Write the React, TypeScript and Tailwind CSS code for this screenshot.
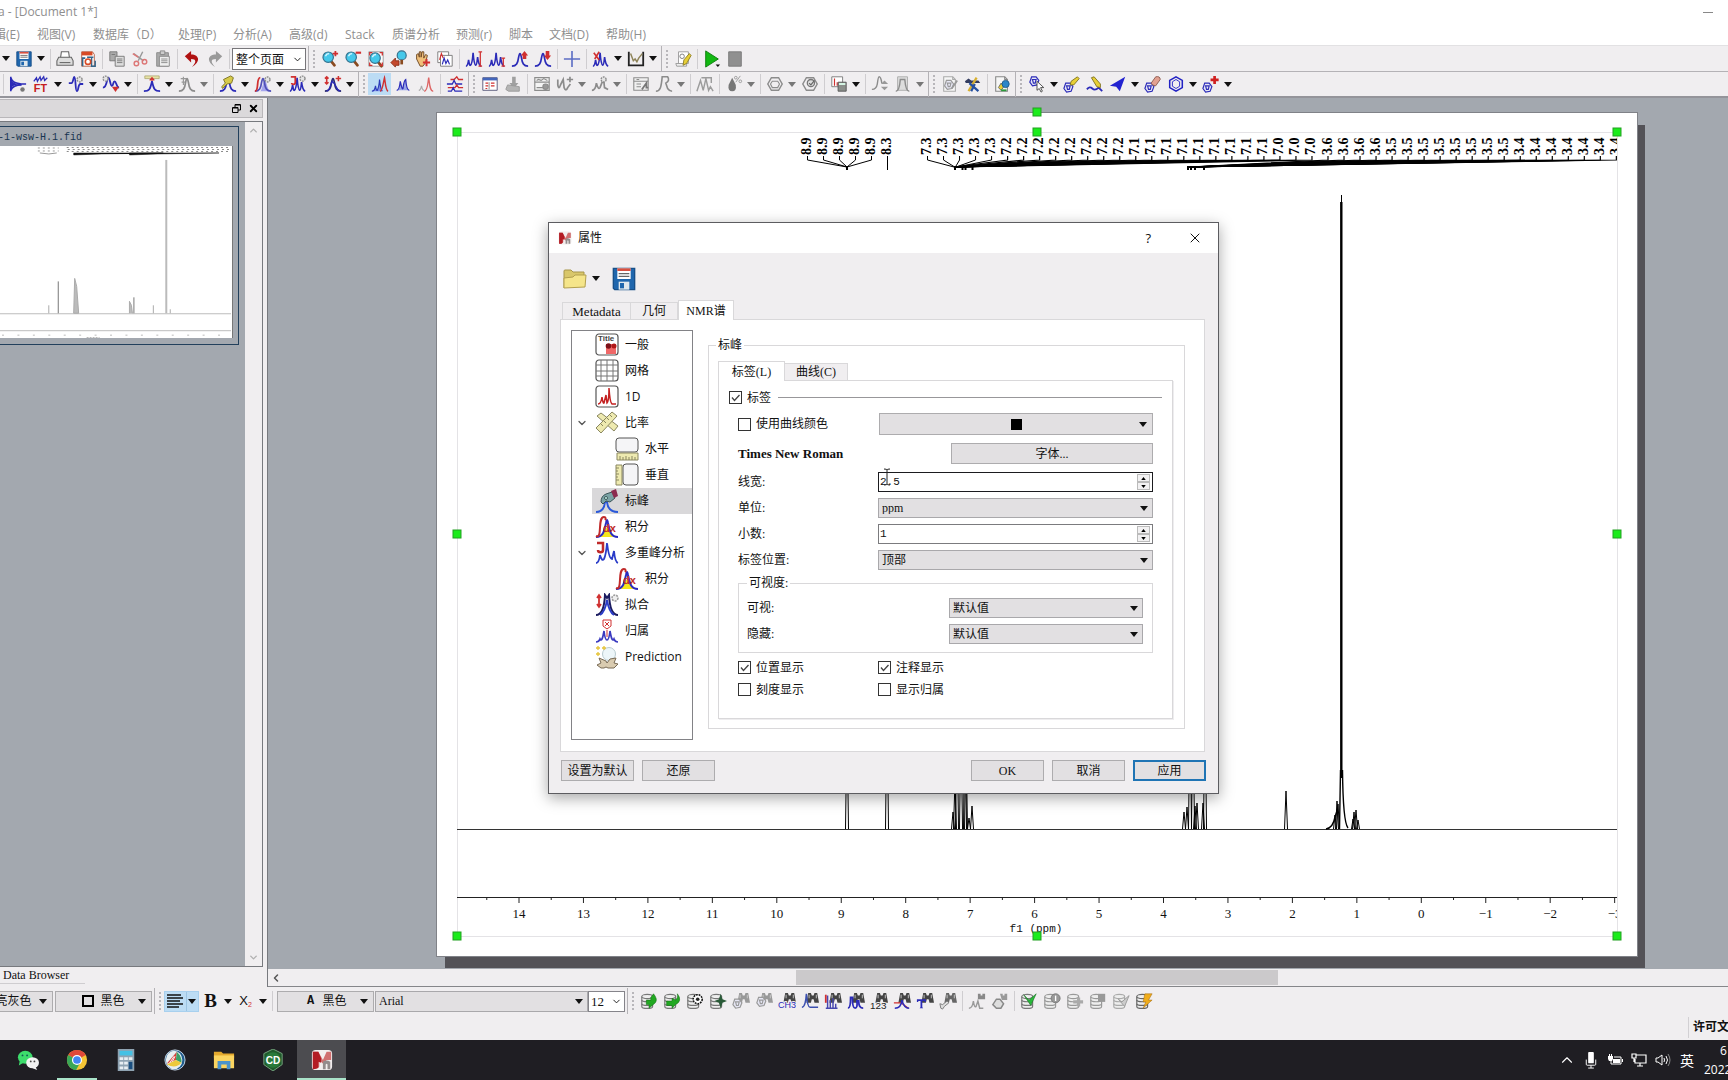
import type { ReactNode } from 'react'
import { ChevronDown, ChevronLeft, ChevronUp, X } from 'lucide-react'

const BLUE = '#2b2bb8'
const RED = '#d03030'
const GRAY = '#8c8c8c'

/* ---------- small drawing parts, all on a 20x20 grid ---------- */

function Peak({ c = BLUE }: { c?: string }) {
  return <path d="M1 18C6 18 7.500 15 8.500 8Q10 0 11.500 8C12.500 15 14 18 19 18" fill="none" stroke={c} strokeWidth="1.9" />
}

function Peaks({ c = BLUE }: { c?: string }) {
  return <path d="M1 18Q3 18 4 11Q5 18 6 17Q8 16 9 3Q10 16 12 17Q13 17 14 8Q15 17 18 18" fill="none" stroke={c} strokeWidth="1.8" />
}

function Gear({ x = 14, y = 5 }: { x?: number; y?: number }) {
  return <circle cx={x} cy={y} r="2.800" fill="#e4e4e4" stroke="#8a8a8a" strokeWidth="1.500" strokeDasharray="2 1" />
}

function Lens({ x = 10, y = 8 }: { x?: number; y?: number }) {
  return (
    <g>
      <path d={`M${x + 3} ${y + 4}l4 5`} stroke="#8a4a20" strokeWidth="3" strokeLinecap="round" />
      <circle cx={x} cy={y} r="5.800" fill="#45c8ea" stroke="#36718d" strokeWidth="1.300" />
      <path d={`M${x - 3} ${y - 1}q1-3 4-3`} fill="none" stroke="#d8f6ff" strokeWidth="1.400" />
    </g>
  )
}

function Binoculars({ c = '#444' }: { c?: string }) {
  return (
    <g fill={c}>
      <path d="M8 1h3l1 3h2l1-3h3l2 11h-5l-1-4h-2l-1 4H6z" />
      <path d="M9 3v4M17 3v4" stroke="#ccc" />
    </g>
  )
}

function Hexagon({ c = BLUE }: { c?: string }) {
  return (
    <g fill="none" stroke={c} strokeWidth="1.700">
      <path d="M10 2l7 4v8l-7 4-7-4V6z" />
      <path d="M10 5l4 2.500v5L10 15l-4-2.500v-5z" strokeWidth="1" />
    </g>
  )
}

function SmallHex({ c = BLUE, x = 2, y = 8 }: { c?: string; x?: number; y?: number }) {
  return <path d={`M${x + 2} ${y}h5l3 4-2 5-5 1-3-4zM${x + 3} ${y + 3}h4l-1 4h-2z`} fill="#e6e6f4" stroke={c} strokeWidth="1.300" />
}

function Database({ c = '#777' }: { c?: string }) {
  return (
    <g fill="#eee" stroke={c} strokeWidth="1.300">
      <path d="M2 5v11c0 3 12 3 12 0V5" />
      <ellipse cx="8" cy="5" rx="6" ry="2.300" />
      <path d="M2 9c0 2.500 12 2.500 12 0M2 13c0 2.500 12 2.500 12 0" fill="none" />
    </g>
  )
}

function Sheet({ c = '#888' }: { c?: string }) {
  return (
    <g fill="#f6f6f6" stroke={c} strokeWidth="1.200">
      <path d="M3 2h10l3 3v13H3z" />
      <path d="M13 2v3h3" fill="none" />
    </g>
  )
}

function Floppy() {
  return (
    <g>
      <path d="M2 2h16v16H3l-1-1z" fill="#1f66ad" stroke="#174f88" />
      <path d="M5 2h10v8H5z" fill="#fff" />
      <path d="M5 2h10v2H5z" fill="#d85040" />
      <path d="M6 6h8M6 8h8" stroke="#666" />
      <path d="M6 12h8v6H6z" fill="#dfe8ee" />
      <path d="M7 13h3v4H7z" fill="#1f66ad" />
    </g>
  )
}

const icons: Record<string, ReactNode> = {
  save: <Floppy />,
  print: <g stroke="#666" strokeWidth="1.200"><path d="M6 2h8l1 7H5z" fill="#fff" /><path d="M3 8h14l2 4v5H1v-5z" fill="#ddd" /><path d="M4 14h12" /></g>,
  pdf: <g><path d="M3 2h12l2 3v13H3z" fill="#fff" stroke="#b05a40" /><path d="M3 2h12v4H3z" fill="#d84a25" /><path d="M4 18V9h3" fill="none" stroke="#33658a" strokeWidth="1.800" /><path d="M9 8h7M14 8v10h4v-6" fill="none" stroke="#33658a" strokeWidth="1.600" /><circle cx="10" cy="13" r="3" fill="none" stroke="#d84a25" strokeWidth="1.800" /></g>,
  copy: <g stroke="#777"><path d="M2 2h8v10H2z" fill="#aaa" /><path d="M8 7h10v11H8z" fill="#ddd" /><path d="M10 10h6M10 12h6M10 14h6M4 5h4" /></g>,
  cut: <g fill="none" strokeWidth="1.600"><path d="M3 4l11 8M13 2L8 12" stroke="#999" /><circle cx="6" cy="15" r="2.500" stroke="#d77" /><circle cx="15" cy="13" r="2.500" stroke="#d77" /><path d="M2 4l6 4" stroke="#d77" /></g>,
  paste: <g stroke="#888"><path d="M3 3h13v15H3z" fill="#aaa" /><path d="M6 7h11v11H6z" fill="#eee" /><path d="M7 1h5v4H7z" fill="#ccc" /><path d="M8 10h7M8 12h7M8 14h7" /></g>,
  undo: <path d="M10 19c5-6 5-9-1-9v4L2 7l7-6v4c8 0 12 7 1 14z" fill="#b01212" />,
  redo: <path d="M10 19c-5-6-5-9 1-9v4l7-7-7-6v4C3 5-1 12 10 19z" fill="#9a9a9a" />,
  zoomIn: <g><Lens x={8} y={8} /><path d="M16 1v6M13 4h6" stroke={RED} strokeWidth="2" /></g>,
  zoomOut: <g><Lens x={8} y={8} /><path d="M13 3h6" stroke={RED} strokeWidth="2.400" /></g>,
  zoomFit: <g><path d="M2 2h16v16H2z" fill="#fff" stroke="#999" /><Lens x={9} y={9} /><path d="M3 6V3h3M14 3h3v3M3 14v3h3M17 14v3h-3" fill="none" stroke={RED} strokeWidth="1.400" /></g>,
  zoomBack: <g><circle cx="13" cy="6" r="5" fill="#45c8ea" stroke="#36718d" strokeWidth="1.300" /><path d="M13 11v5" stroke="#8a4a20" strokeWidth="3" /><path d="M1 14l5-5v3h4v5H6v2z" fill="#c4482c" stroke="#8b3018" /></g>,
  pan: <g><path d="M4 10V5l2-1 1 4V2h2v6l1-6h2v7l2-4 2 1-2 8-3 4H8z" fill="#f0c07a" stroke="#6a4420" /><path d="M15 10v8M11 14h8" stroke={RED} strokeWidth="2.200" /></g>,
  fullPages: <g fill="#fff" stroke="#777"><path d="M2 2h12v12H2z" /><path d="M5 6h13v12H5z" /><path d="M4 11l2-7 2 5" stroke={RED} fill="none" strokeWidth="1.300" /><path d="M7 16l2-7 2 6 2-4 2 5" stroke={BLUE} fill="none" strokeWidth="1.300" /></g>,
  peaksBoth: <g><Peaks /><path d="M17 2v16M15 2h4M15 18h4" stroke={RED} strokeWidth="1.400" /></g>,
  peaksLow: <g><Peaks /><path d="M17 9v9M15 9h4M15 18h4" stroke={RED} strokeWidth="1.400" /></g>,
  peakUp: <g><Peak /><path d="M13 10V6h-2l4-5 4 5h-2v4z" fill={RED} /></g>,
  peakDown: <g><Peak /><path d="M13 1v5h-2l4 5 4-5h-2V1z" fill={RED} /></g>,
  cross: <path d="M10 1v18M1 10h18" stroke="#5c6ec4" strokeWidth="1.800" />,
  crossPeak: <g><Peaks /><path d="M2 3l6 8M8 2L3 10" stroke={RED} strokeWidth="1.800" /></g>,
  measure: <g fill="none"><path d="M2 2v15h16V2" stroke="#222" strokeWidth="2" /><path d="M4 4l3 8 2-2 2 3 2-4 4-5" stroke="#8e8358" strokeWidth="1.600" /></g>,
  script: <g><path d="M5 2h11v13H5z" fill="#fff" stroke="#999" /><path d="M2 15h12v3H3z" fill="#eee" stroke="#999" /><circle cx="9" cy="7" r="2.500" fill="none" stroke="#777" /><path d="M10 17l1-6 6-7 2 2-5 9z" fill="#e7cf35" stroke="#8a7a20" /></g>,
  play: <g><path d="M3 1l14 9-14 9z" fill="#12b812" stroke="#0a7a0a" /><path d="M14 16h5l-2.500 3z" fill="#111" /></g>,
  stop: <path d="M3 2h14v16H3z" fill="#909090" stroke="#777" />,

  decay: <g><path d="M2 2v16M2 3c2 6 6 6 12 7h5M2 17c2-5 6-6 12-6" stroke={BLUE} strokeWidth="1.800" fill="none" /><path d="M2 4c2 5 5 6 12 6-7 1-10 1-12 6z" fill={BLUE} /><circle cx="15" cy="16" r="2.500" fill="#777" /></g>,
  ft: <g><path d="M2 7l3-4 1 4 3-5 1 4 3-4 1 4 3-3" fill="none" stroke={BLUE} strokeWidth="1.400" /><text x="2" y="19" className="font-['Liberation_Sans'] text-[12px] font-bold" fill="#c62020">FT</text></g>,
  phase: <g><path d="M2 9h3c2 0 2-7 3-7 2 0 1 16 3 16s1-8 4-8h3" fill="none" stroke={BLUE} strokeWidth="2" /><Gear /></g>,
  baseline: <g><path d="M1 14c5 0 4-11 6-11s2 9 4 9 1-5 3-5 2 7 5 7" fill="none" stroke={BLUE} strokeWidth="2" /><Gear x={4} y={4} /><path d="M11 13h8l-4 6z" fill={RED} /></g>,
  pickPeak: <g><path d="M2 1h16v3H2z" fill="#e7e2a6" stroke="#a7a268" strokeWidth=".8" /><path d="M10 3v7M7.500 6L10 3l2.500 3" stroke={RED} strokeWidth="1.500" fill="none" /><path d="M1 18c6 0 7-2 9-11 2 9 3 11 9 11" fill="none" stroke={BLUE} strokeWidth="2" /></g>,
  pickGray: <g><Peak c={GRAY} /><path d="M3 4h6M4 8h4M6 2v9" stroke="#999" strokeWidth="1.300" /></g>,
  peakPen: <g><Peak /><path d="M3 13l4-4-2-4 8-4 3 2-2 6-5 1-5 5z" fill="#d6ca4a" stroke="#7a7020" /></g>,
  integral: <g><path d="M7 18c2-1 3-12 5-12s3 11 6 12z" fill="#a5a5ec" /><Peak c="#5050b8" /><path d="M1 18c5 0 1-15 6-15" fill="none" stroke={RED} strokeWidth="2" /><Gear x={15} /></g>,
  jPeaks: <g><Peaks /><path d="M2 2h5v6c0 3-4 3-4 1" fill="none" stroke={RED} strokeWidth="2" /><Gear x={15} y={4} /></g>,
  fitPeaks: <g><Peak c="#2a2a70" /><path d="M3 18c4-1 4-8 6-11l3 3c2 3 2 7 6 8" fill="none" stroke={BLUE} strokeWidth="1.500" /><path d="M3 2v8M1 4l2-2 2 2M1 8l2 2 2-2M13 4h6M16 1v6" stroke={RED} strokeWidth="1.700" fill="none" /></g>,
  overlay: <g><path d="M1 18q3 0 4-6 1 6 2 5Q9 13 9.500 5q1 10 3 13" fill="#7c8ce8" stroke="#2b3bb8" strokeWidth="1.300" /><path d="M10 18c3 0 4-12 5-15 1 5 1 14 4 15" fill="none" stroke={RED} strokeWidth="1.600" /></g>,
  active: <path d="M3 17q3 0 4-10 2 10 3 8 1-9 3-10 1 12 4 12" fill="#98a4e6" stroke={BLUE} strokeWidth="1.400" />,
  reference: <g fill="none"><path d="M2 17q2 0 3-5 1 5 3 5" stroke="#aaa" strokeWidth="1.300" /><path d="M8 18c4 0 4-10 5-15 1 6 1 15 5 15" stroke="#d66" strokeWidth="1.500" /></g>,
  stacked: <g fill="none" strokeWidth="1.400"><path d="M5 5h4l3-3 2 3 5 0" stroke={RED} /><path d="M1 10h6l2-4 2 4h7" stroke={BLUE} /><path d="M2 14h8l2-3 2 3h5" stroke={RED} /><path d="M2 18h4l2-4 2 4h8" stroke={BLUE} /></g>,
  table: <g><path d="M2 3h16v14H2z" fill="#fff" stroke="#557" /><path d="M2 3h16v3H2z" fill="#46b" /><path d="M5 9h3M5 12h3M5 15h2M11 9h4M11 12h4" stroke={RED} strokeWidth="1.300" /><path d="M9 8v8" stroke="#888" /></g>,
  stamp: <g><path d="M9 2h4v7h3l-5 6-5-6h3z" fill="#a0a0a0" /><path d="M4 11l-2 5 3 2h12v-5z" fill="#b4b4b4" stroke="#999" /></g>,
  gBox: <g fill="none" stroke={GRAY} strokeWidth="1.300"><path d="M2 3h16v14H2z" fill="#f4f4f4" /><path d="M2 8h16M4 6l2-1 3 1 3-2 4 2M4 14h7" /><circle cx="14" cy="13" r="3" fill="#999" /></g>,
  gPeakPlus: <path d="M2 5v6q1 6 3 0l3-6 1 9q2 5 4 0l3-4M12 5h7M15.500 2v6" fill="none" stroke={GRAY} strokeWidth="1.900" />,
  gWave: <g><path d="M1 17q4 0 5-8 2 8 4 5l4-10 1 10 4 2" fill="none" stroke={GRAY} strokeWidth="1.900" /><Gear x={14} y={5} /></g>,
  gSheet: <g fill="none" stroke={GRAY} strokeWidth="1.200"><path d="M2 3h16v14H2z" fill="#f0f0f0" /><path d="M2 7h16M5 5h3M5 10h5M5 13h5" /><path d="M11 16l5-7v5h2" stroke="#777" strokeWidth="2" /></g>,
  gPeakR: <g><path d="M1 18c5 0 6-5 7-16h6q3 4-2 7l2 6q2 3 5 3" fill="none" stroke={GRAY} strokeWidth="1.800" /></g>,
  gTwo: <path d="M1 18l4-12 3 11 3-13 3 13 2-4 3 5M6 3h11v6" fill="none" stroke="#9c9c9c" strokeWidth="1.600" />,
  gDrop: <g><path d="M8 3l4 8q1 7-4 7t-4-7z" fill="#777" /><path d="M12 8l5-7" stroke="#999" /><circle cx="12" cy="3" r="1.500" fill="none" stroke="#999" /><circle cx="17" cy="7" r="1.500" fill="none" stroke="#999" /></g>,
  gHex: <g fill="none" stroke={GRAY} strokeWidth="1.600"><path d="M6 3h8l4 7-4 7H6l-4-7z" /><path d="M7 7h6l2 3-2 4H7l-2-4z" strokeWidth="1.200" /></g>,
  gHexGear: <g><path d="M6 3h8l4 7-4 7H6l-4-7z" fill="none" stroke={GRAY} strokeWidth="1.600" /><circle cx="11" cy="9" r="4" fill="#ddd" stroke="#777" strokeWidth="1.400" /><path d="M9 9l2 2 4-5" fill="none" stroke="#666" strokeWidth="1.300" /></g>,
  docCalc: <g><path d="M2 2h12v11H2z" fill="#fff" stroke="#777" /><path d="M5 4v8M8 8v4" stroke={RED} strokeWidth="1.300" /><path d="M9 8h9v10H9z" fill="#8b8f8b" stroke="#555" /><path d="M10 10h7" stroke="#dfe" strokeWidth="2" /></g>,
  gUpDown: <g><path d="M1 16q5 0 6-6 1-8 2-8 2 0 3 7" fill="none" stroke={GRAY} strokeWidth="1.600" /><path d="M11 10h8l-4-4zM11 13h8l-4 4z" fill="#999" /></g>,
  gBarPeak: <g><path d="M4 2h11v15H4z" fill="#ddd" stroke="#aaa" /><path d="M2 18q4 0 5-13h5q1 13 5 13" fill="none" stroke={GRAY} strokeWidth="1.600" /></g>,
  gReport: <g><Sheet c="#aaa" /><SmallHex c="#999" x={4} y={6} /><path d="M12 15l6-9" stroke="#999" strokeWidth="2" /></g>,
  tools: <g><path d="M1 7l4-3 3 2h8l2 3H2z" fill="#333c60" /><path d="M5 18L14 3" stroke="#d8b030" strokeWidth="2.500" /><path d="M6 9l10 9M12 10l-4 8" stroke="#2450a0" strokeWidth="2.500" fill="none" /></g>,
  docHex: <g><Sheet /><path d="M6 14l3-5 3 4-3 4z" fill="#e7cf35" stroke="#666" /><circle cx="14" cy="10" r="4" fill="#2c86c8" stroke="#1b5a8a" /><path d="M9 17h6" stroke="#2a9a3a" strokeWidth="2" /></g>,
  pickHex: <g><SmallHex x={2} y={2} /><path d="M10 7v10l2.500-2 2 4 1.500-1-2-4h3.500z" fill="#fff" stroke="#444" /></g>,
  penHex: <g><SmallHex x={1} y={9} /><path d="M8 11l1-4 7-5 2 2-6 7z" fill="#e7cf35" stroke="#7d7020" /></g>,
  penWave: <g><path d="M1 16q3-4 6-1t7-1l4 4" stroke={BLUE} strokeWidth="2" fill="none" /><path d="M6 3l3-1 7 8v4l-4-1z" fill="#e7cf35" stroke="#7d7020" /></g>,
  arrow: <path d="M1 12L18 2l-6 16-4-5z" fill="#2222d0" />,
  eraser: <g><SmallHex x={1} y={9} /><path d="M8 9l5-7q5-1 5 3l-5 7q-4 0-5-3z" fill="#e2a090" stroke="#8a5a50" /></g>,
  benzene: <Hexagon c="#2222c4" />,
  hexPlus: <g><SmallHex x={1} y={9} /><path d="M14 1v9M9.500 5.500h9" stroke="#d02020" strokeWidth="3" /></g>,

  dbOpen: <g><Database /><path d="M7 9h5V6l3-4q5 6 2 10l-7 6v-4H7z" fill="#22a822" stroke="#136c13" strokeWidth=".6" /></g>,
  dbSave: <g><Database /><path d="M4 10h6V7l4 2q3-2 2-7 6 8-2 12l-4 4v-3H4z" fill="#22a822" stroke="#136c13" strokeWidth=".6" /></g>,
  dbView: <g><Database /><circle cx="13" cy="8" r="5" fill="#fff" stroke="#111" strokeWidth="1.700" strokeDasharray="2 1" /><circle cx="13" cy="8" r="2" fill="#222" /></g>,
  dbAdd: <g><Database /><path d="M13 2l2 6 5 2-5 2-2 6-2-6-5-2 5-2z" fill="#2a5a38" /></g>,
  findHex: <g><Binoculars c="#999" /><SmallHex c="#999" x={1} y={8} /></g>,
  findHex2: <g><Binoculars c="#999" /><SmallHex c="#999" x={2} y={6} /></g>,
  findCh: <g><Binoculars /><text x="0" y="18" className="font-['Liberation_Sans'] text-[10px]" fill={BLUE} stroke="#f0eef0" strokeWidth="2" paintOrder="stroke">CH3</text></g>,
  findPeak: <g><Binoculars /><path d="M1 17q4 0 5-15 1 15 4 15h9" fill="none" stroke="#3c50b0" strokeWidth="1.700" /></g>,
  findBars: <g><Binoculars /><path d="M2 3v9" stroke={RED} strokeWidth="2" /><path d="M4 18V4M7 18V9M10 18V7M13 18v-5M2 18h13" stroke="#4646b0" strokeWidth="1.600" /></g>,
  findMulti: <g><Binoculars /><path d="M1 18q3 0 3-12h2q0 12 3 12t2-8h2q0 8 5 8" fill="none" stroke={BLUE} strokeWidth="2" /></g>,
  find123: <g><Binoculars /><text x="0" y="19" className="font-['Liberation_Sans'] text-[11px]" fill="#222" stroke="#f0eef0" strokeWidth="2" paintOrder="stroke">123</text></g>,
  findCross: <g><Binoculars /><path d="M1 12h8l8 6" fill="none" stroke={RED} strokeWidth="1.500" /><path d="M2 18q7 0 8-9 2 9 8 9" fill="none" stroke={BLUE} strokeWidth="1.700" /></g>,
  findT: <g><Binoculars /><path d="M1 8h10v3h-1l-1-1H7v7l1 1H4l1-1v-7H3l-1 1H1z" fill={BLUE} /></g>,
  findTool: <g><Binoculars c="#666" /><path d="M1 13l3 1 5-4 2 2-5 4-2 3-2-1z" fill="#ddd" stroke="#777" /></g>,
  gFindPeak: <g><path d="M1 18q4 0 5-8 1 8 3 6l2-6 2 8h4" fill="none" stroke="#999" strokeWidth="1.600" /><path d="M11 2h3v2h2V2h3v6h-8z" fill="#888" /></g>,
  gFindFlask: <g><path d="M6 8h4l4 5-3 5H6l-4-4z" fill="#ddd" stroke="#888" strokeWidth="1.600" /><path d="M10 2h3v2h2V2h3v7h-6z" fill="#999" /></g>,
  dbOk: <g><Database /><path d="M4 3l6 6 8-7-6 13z" fill="#28b83a" stroke="#176a20" strokeWidth=".6" /></g>,
  dbInfo: <g><Database c="#999" /><circle cx="14" cy="7" r="5" fill="#999" stroke="#777" /><path d="M14 4v6" stroke="#fff" strokeWidth="1.500" /></g>,
  dbPlus: <g><Database c="#999" /><path d="M14 6v10M8 11h11" stroke="#aaa" strokeWidth="3.500" /></g>,
  dbBox: <g><Database c="#999" /><path d="M10 2h8v9h-8z" fill="#999" /></g>,
  dbEdit: <g><Database c="#aaa" /><path d="M7 8l4 3 8-7-5 12z" fill="#ccc" stroke="#999" /></g>,
  dbFlash: <g><Database c="#666" /><path d="M11 2h8l-4 7h4L9 18l3-7H9z" fill="#f0ad1c" stroke="#a66c10" strokeWidth=".6" /></g>,
}

/* '|' separator, ':' group edge with grip, 'v' drop-down caret, 'V' disabled caret */
const rowOne = 'print pdf | copy cut paste | undo redo |'.split(' ')
const rowOneView = ': zoomIn zoomOut zoomFit zoomBack pan fullPages | peaksBoth peaksLow peakUp peakDown | cross | crossPeak v measure v : script | play stop'.split(' ')
const rowTwo = 'decay ft v phase v baseline v | pickPeak v pickGray V | peakPen v integral v jPeaks v fitPeaks v : overlay active reference | stacked : table stamp | gBox gPeakPlus V gWave V | gSheet gPeakR V | gTwo | gDrop V | gHex V gHexGear | docCalc v | gUpDown gBarPeak V : gReport tools | docHex : pickHex v penHex penWave arrow v eraser benzene v hexPlus v'.split(' ')
const rowThree = ': dbOpen dbSave dbView dbAdd findHex findHex2 findCh findPeak findBars findMulti find123 findCross findT findTool | gFindPeak gFindFlask | dbOk dbInfo dbPlus dbBox dbEdit dbFlash'.split(' ')

function Caret({ dim = false }: { dim?: boolean }) {
  return (
    <svg viewBox="0 0 8 5" className="h-[5px] w-2 shrink-0">
      <path d="M0 0h8L4 5z" fill={dim ? '#777' : '#111'} />
    </svg>
  )
}

function ToolItem({ name }: { name: string }) {
  if (name === '|') return <span className="flex w-[6px] justify-center"><span className="h-5 w-px bg-[#cfcdd0]" /></span>
  if (name === ':') {
    return (
      <span className="flex w-3 items-center gap-1 pl-[2px]">
        <span className="h-[26px] w-px bg-[#b4b2b6]" />
        <span className="h-[18px] border-l-2 border-dotted border-[#b8b6ba]" />
      </span>
    )
  }
  if (name === 'v' || name === 'V') {
    return <button aria-label="menu" className="flex h-6 w-3 items-center justify-center"><Caret dim={name === 'V'} /></button>
  }
  return (
    <button aria-label={name} className={`flex h-[22px] w-[23px] shrink-0 items-center justify-center ${name === 'overlay' ? 'bg-[#bcdcf4]' : ''}`}>
      <svg viewBox="0 0 20 20" className="h-[18px] w-[18px]">{icons[name]}</svg>
    </button>
  )
}

function Tools({ items }: { items: string[] }) {
  return <>{items.map((name, i) => <ToolItem key={i} name={name} />)}</>
}

/* ---------- spectrum ---------- */

const shifts = [
  ...Array(5).fill('7.3'), ...Array(8).fill('7.2'), ...Array(9).fill('7.1'), ...Array(3).fill('7.0'),
  ...Array(4).fill('3.6'), ...Array(8).fill('3.5'), ...Array(7).fill('3.4'),
] as string[]

/* x, top */
const peaks = [
  [847, 720], [887, 700],
  [953, 812], [955, 780], [957, 700], [961, 720], [965, 690], [966, 740], [969, 818], [972, 806],
  [1184, 812], [1187, 807], [1190, 700], [1193, 700], [1195, 806], [1197, 803], [1203, 803], [1205, 690],
  [1286, 791], [1335, 815], [1337, 801], [1338, 804],
  [1353, 819], [1354, 812], [1356, 810], [1358, 820],
]

const handles = [[457, 132], [1037, 132], [1617, 132], [457, 534], [1617, 534], [457, 936], [1037, 936], [1617, 936], [1037, 112]]

function tickX(ppm: number) {
  return 1421.3 - ppm * 64.45
}

function Spectrum() {
  const majors = Array.from({ length: 18 }, (_, i) => 14 - i)
  return (
    <svg viewBox="437 113 1200 843" className="block w-full overflow-visible">
      <defs>
        <clipPath id="plot"><rect x="457" y="132" width="1160" height="804" /></clipPath>
      </defs>
      <rect x="457.500" y="132.500" width="1160" height="804" fill="none" stroke="#e4e3e6" />
      <g clipPath="url(#plot)" stroke="#000" fill="none">
        {['8.9', '8.9', '8.9', '8.9', '8.9', '8.3'].map((t, i) => (
          <g key={i}>
            <text transform={`translate(${811 + i * 16} 155) rotate(-90)`} className="font-['Liberation_Serif'] text-[14px] font-bold" fill="#000" stroke="none">{t}</text>
            {i < 5 ? <path d={`M${807.5 + i * 16} 156v4L847 167`} /> : <path d="M887.500 156v14" />}
          </g>
        ))}
        <path d="M847 166v4" strokeWidth="2" />
        {shifts.map((t, i) => {
          const x = 926 + i * 16.02
          const target = i < 25 ? 954 + (i % 5) * 0.7 : 1188 + (i % 4) * 1.2
          return (
            <g key={i}>
              <text transform={`translate(${x + 5} 155) rotate(-90)`} className="font-['Liberation_Serif'] text-[14px] font-bold" fill="#000" stroke="none">{t}</text>
              <path d={`M${x + 1.5} 156v4L${target} 167`} strokeWidth={i < 5 ? 1 : 1.2} />
            </g>
          )
        })}
        <path d="M955 166v4M962.500 166v4M965.500 166v4M972.500 166v4" strokeWidth="2" />
        <path d="M1188 166v4M1191 166v4M1195 166v4M1204 166v4" strokeWidth="2" />
        <path d="M457 829.500H1617" stroke="#333" />
        {peaks.map(([x, top], i) => (
          <path key={i} d={`M${x - 1.5} 829L${x} ${top}L${x + 1.5} 829`} />
        ))}
        <path d="M1341.500 195v8" />
        <path d="M1341.300 202v576" strokeWidth="2.400" />
        <path d="M1340.500 770L1339.500 829M1342.500 770Q1343 822 1348 828M1326 829q7-1 9-12l2-6" strokeWidth="1.400" />
        <path d="M457 897.500H1617" stroke="#222" />
        {majors.map((n) => (
          <g key={n}>
            <path d={`M${tickX(n)} 897v6M${tickX(n + 0.5)} 897v3`} stroke="#222" />
            <text x={tickX(n)} y="918" textAnchor="middle" className="font-['Liberation_Serif'] text-[13px]" fill="#111" stroke="none">{n < 0 ? `−${-n}` : n}</text>
          </g>
        ))}
        <text x="1036" y="932" textAnchor="middle" className="font-['Liberation_Mono'] text-[11px]" fill="#111" stroke="none">f1 (ppm)</text>
      </g>
      {handles.map(([x, y], i) => (
        <rect key={i} x={x - 4} y={y - 4} width="8" height="8" fill="#1cec1c" stroke="#22a022" />
      ))}
    </svg>
  )
}

function Thumbnail() {
  return (
    <svg viewBox="0 145 233 193" className="block w-[233px] border-r border-[#777] bg-white">
      <path d="M38 147h21M38 150h21" stroke="#999" strokeDasharray="2 3" />
      <path d="M67 146.500h165M68 148.500h165M67 150.500h165" stroke="#888" strokeDasharray="2 3" />
      <path d="M40 152l9 1 8-1" fill="none" stroke="#999" />
      <path d="M74 152h90l-62 1-28 1zM130 152h90l-62 1-28 1z" fill="#111" stroke="#111" strokeWidth=".5" />
      <path d="M0 313.500H232" stroke="#bbb" />
      <path d="M49 313v-8M154 313v-8M171 313v-4" stroke="#aaa" />
      <path d="M58.500 313v-32" stroke="#777" />
      <path d="M74 313l1-35 2 8 2 27zM130 313v-12l2 4 1 8" fill="#bbb" stroke="#aaa" />
      <path d="M134.500 313v-16" stroke="#777" />
      <path d="M167 313V159" stroke="#bbb" strokeWidth="2" />
      <path d="M0 330.500H232" stroke="#bbb" />
      <path d="M2 335h230" stroke="#bbb" strokeDasharray="2 13.500" />
      <path d="M87 337.500h13" stroke="#aaa" strokeDasharray="2 1" />
    </svg>
  )
}

/* ---------- dialog controls ---------- */

const field = 'h-full w-full appearance-none border border-[#a9a8ab] bg-[#e2e0e2] pl-[3px] text-[12px] leading-none outline-none'

function Dropdown({ id, value }: { id: string; value: string }) {
  return (
    <div className="relative h-5">
      <select id={id} className={field} defaultValue={value}><option>{value}</option></select>
      <span className="pointer-events-none absolute inset-y-0 right-[5px] flex items-center"><Caret /></span>
    </div>
  )
}

function Spin({ id, value, active = false }: { id: string; value: string; active?: boolean }) {
  return (
    <div className={`relative flex h-5 items-center border bg-white pr-[2px] ${active ? 'border-[#1b1b1f]' : 'border-[#7b7b7e]'}`}>
      <input id={id} defaultValue={value} className="min-w-0 flex-1 pl-px font-['Liberation_Mono'] text-[11px] leading-4 outline-none" />
      <span className="flex h-4 w-[13px] flex-col">
        <button aria-label="up" className="flex h-2 items-center justify-center border border-[#bbb] bg-[#f2f1f2]"><svg viewBox="0 0 6 4" className="h-[3px] w-[5px]"><path d="M0 4h6L3 0z" /></svg></button>
        <button aria-label="down" className="flex h-2 items-center justify-center border border-[#bbb] bg-[#f2f1f2]"><svg viewBox="0 0 6 4" className="h-[3px] w-[5px]"><path d="M0 0h6L3 4z" /></svg></button>
      </span>
      {active && (
        <svg viewBox="0 0 8 18" className="absolute -top-[5px] left-1 h-[18px] w-2">
          <path d="M1 1q3 0 3 1 0-1 3-1M4 2v14M1 17q3 0 3-1 0 1 3 1" fill="none" stroke="#222" />
        </svg>
      )}
    </div>
  )
}

function Check({ label, on = false }: { label: string; on?: boolean }) {
  return (
    <label className="flex h-[13px] items-center gap-[5px] whitespace-nowrap">
      <span className="relative h-[13px] w-[13px]">
        <input type="checkbox" defaultChecked={on} className="peer block h-[13px] w-[13px] appearance-none border border-[#333] bg-white" />
        <svg viewBox="0 0 13 13" className="pointer-events-none absolute inset-0 hidden h-[13px] w-[13px] peer-checked:block">
          <path d="M3 6.500l2.500 3L10.500 4" fill="none" stroke="#444" strokeWidth="1.300" />
        </svg>
      </span>
      {label}
    </label>
  )
}

function PushButton({ label, primary = false }: { label: string; primary?: boolean }) {
  return (
    <button className={`h-[21px] w-[73px] whitespace-nowrap bg-[#e2e0e2] ${primary ? 'border-2 border-[#1f74b4]' : 'border border-[#adacae]'}`}>{label}</button>
  )
}

const curve = (c: string) => <path d="M1 22C8 22 9 17 11 8Q12 2 13 8C15 17 16 22 23 22" fill="none" stroke={c} strokeWidth="2" />
const frame = <rect x="1" y="1" width="22" height="21" rx="3" fill="#fff" stroke="#555" strokeWidth="1.200" />
const integralIcon = (
  <g>
    <path d="M5 22q4-2 5-9h4q1 7 5 9z" fill="#f4e61c" />
    {curve('#2a2ac0')}
    <path d="M1 21c7 3 1-19 8-19 2 0 2 2 1 3" fill="none" stroke="#c02a2a" strokeWidth="2" />
    <text x="8" y="17" className="font-['Liberation_Sans'] text-[11px] font-bold" fill="#c02a2a">dx</text>
  </g>
)

type Node = { label: string; icon: ReactNode; child?: boolean; open?: boolean; selected?: boolean }

const tree: Node[] = [
  { label: '一般', icon: <g>{frame}<text x="3" y="8" className="font-['Liberation_Sans'] text-[8px] font-bold" fill="#444">Title</text><path d="M11 11h10v10H11z" fill="#f06868" /><circle cx="13.500" cy="13" r="2.800" fill="#7d1018" /><circle cx="19" cy="13" r="2.500" fill="#b01818" /></g> },
  { label: '网格', icon: <g>{frame}<path d="M6 1v21M12 1v21M18 1v21M1 6h22M1 12h22M1 17h22" stroke="#777" /></g> },
  { label: '1D', icon: <g>{frame}<path d="M3 19q3 0 4-7 1 7 2 6l2-8 1 8q2-2 2-15 1 15 3 16h4" fill="none" stroke="#c42020" strokeWidth="1.500" /></g> },
  { label: '比率', open: true, icon: <g fill="#eeeab0" stroke="#8a8760"><path d="M2 5l4-3 17 13-4 5z" /><path d="M1 17L17 1l5 4L6 22z" /><path d="M6 13l2 2M9 10l2 2M12 7l2 2M15 4l2 2" /></g> },
  { label: '水平', child: true, icon: <g><rect x="1" y="1" width="22" height="14" rx="3" fill="#f5f5f7" stroke="#555" /><path d="M2 16h21v7H2z" fill="#eeeab0" stroke="#8a8760" /><path d="M5 19v4M8 20v3M11 19v4M14 20v3M17 19v4M20 20v3" stroke="#8a8760" /></g> },
  { label: '垂直', child: true, icon: <g><rect x="8" y="1" width="15" height="21" rx="3" fill="#f5f5f7" stroke="#555" /><path d="M1 2h6v20H1z" fill="#eeeab0" stroke="#8a8760" /><path d="M1 5h3M1 8h2M1 11h3M1 14h2M1 17h3" stroke="#8a8760" /></g> },
  { label: '标峰', selected: true, icon: <g><path d="M1 23q8 0 9-10h2q1 10 11 10" fill="none" stroke="#2a58d8" strokeWidth="2" /><path d="M6 13q0-6 5-8l6-2 3 6-5 4-4-1-3 3z" fill="#7ba3a5" stroke="#3c5558" /><circle cx="11" cy="9" r="1.500" fill="#cfe" stroke="#3c5558" /><path d="M16 2l5-2 2 7-4 2z" fill="#8c2c50" /></g> },
  { label: '积分', icon: integralIcon },
  { label: '多重峰分析', open: true, icon: <g><path d="M1 22q3 0 4-8 2 7 4 4Q11 14 12 2q2 16 5 16l2-8q1 11 4 12" fill="none" stroke="#2a3cc8" strokeWidth="1.800" /><path d="M2 2h6v7c0 3-5 3-5 0" fill="none" stroke="#c02a2a" strokeWidth="2.500" /></g> },
  { label: '积分', child: true, icon: integralIcon },
  { label: '拟合', icon: <g><path d="M1 22q8 0 9-20l2 3 2-3q1 20 9 20" fill="none" stroke="#1c1c60" strokeWidth="2" /><path d="M5 22q5-3 7-15 2 12 7 15" fill="none" stroke="#2a3cc8" strokeWidth="1.800" /><path d="M4 3v10M2 5l2-3 2 3M2 11l2 3 2-3" fill="none" stroke={RED} strokeWidth="1.800" /><circle cx="20" cy="5" r="3" fill="#eee" stroke="#999" strokeWidth="1.500" strokeDasharray="2 1" /></g> },
  { label: '归属', icon: <g><path d="M8 1h8v6l-4 3-4-3z" fill="#fff" stroke={RED} /><path d="M10 3l4 4M14 3l-4 4M12 11v7" stroke={RED} /><path d="M1 23q3 0 4-3 2 4 4-8 1 9 3 9t3-9q2 12 4 8 1 3 4 3" fill="none" stroke="#3a3ac0" strokeWidth="1.700" /></g> },
  { label: 'Prediction', icon: <g><circle cx="14" cy="9" r="6.500" fill="#edf6f9" stroke="#b8cbd0" /><path d="M4 13l7 3 1 2 3-4 6-1-2 5 4 1-4 4h-6l-2-1-2 1H6l-4-3 4-2z" fill="#d9cbb0" stroke="#786a55" /><path d="M3 1v4M1 3h4M9 1v4M7 3h4M3 7v4M1 9h4" stroke="#e6c438" strokeWidth="1.300" /></g> },
]

function MnovaLogo({ size = 'h-[14px] w-[14px]' }: { size?: string }) {
  return (
    <svg viewBox="0 0 24 24" className={size}>
      <rect x="1" y="1" width="22" height="22" rx="4" fill="#f2eeee" />
      <path d="M2 3h6l5 9 4-9h5v9h-5l-3 5-5-5v7q-1 3-7 3z" fill="#d07070" />
      <path d="M2 3h6l3 7v5l-3-1v6q-1 2-6 2z" fill="#b31c24" />
      <path d="M13 22v-8q4-3 8 0v8h-3v-5q-1-2-2 0v5z" fill="#938c8c" />
    </svg>
  )
}

function Dialog() {
  return (
    <section role="dialog" aria-label="属性" className="absolute left-[548px] top-[222px] w-[671px] border border-[#5c5c60] bg-[#f0eef0] shadow-[0_4px_14px_rgba(0,0,0,0.35)]">
      <header className="flex h-[30px] items-center bg-white pl-[9px] pr-[15px]">
        <MnovaLogo />
        <h2 className="ml-[6px] flex-1 text-[12px]">属性</h2>
        <button className="mr-9 font-['Open_Sans'] text-[13px]">?</button>
        <button aria-label="close"><X className="h-4 w-4" strokeWidth={1.5} /></button>
      </header>

      <div className="flex h-[47px] items-center pl-[14px] pt-1">
        <button aria-label="open" className="flex items-center gap-[5px]">
          <svg viewBox="0 0 24 20" className="h-5 w-6">
            <path d="M1 19V2q0-1 1-1h6l2 2h11v4" fill="#d9c76a" stroke="#a8964a" />
            <path d="M1 19V9l9-1 2-2h11l-1 12z" fill="#f5e58a" stroke="#b3a04e" />
          </svg>
          <Caret />
        </button>
        <button aria-label="save" className="ml-3">
          <svg viewBox="1 1 18 18" className="h-6 w-6"><Floppy /></svg>
        </button>
      </div>

      <div role="tablist" className="flex h-[19px] items-end pl-[13px]">
        <button role="tab" className="h-[17px] w-[69px] border border-b-0 border-[#d9d8da] text-[13px] leading-none">Metadata</button>
        <button role="tab" className="h-[17px] w-[47px] border border-b-0 border-l-0 border-[#d9d8da] leading-none">几何</button>
        <button role="tab" aria-selected="true" className="-mb-px h-5 w-[56px] border border-b-0 border-[#d9d8da] bg-white leading-none">NMR谱</button>
      </div>

      <div className="ml-[11px] mr-[13px] flex border border-[#d9d8da] bg-white pb-[11px] pl-[10px] pr-[19px] pt-[10px]">
        <ul className="w-[122px] shrink-0 border border-[#828286] pt-px font-['Open_Sans','Noto_Sans_CJK_SC',sans-serif] text-[12px]">
          {tree.map((n, i) => (
            <li key={i} className="flex h-[26px] items-center">
              <span className="flex w-5 justify-center">{n.open && <ChevronDown className="h-3 w-3" strokeWidth={2.5} color="#555" />}</span>
              <span className={`flex h-full flex-1 items-center gap-[6px] whitespace-nowrap ${n.child ? 'pl-[23px]' : 'pl-[3px]'} ${n.selected ? 'bg-[#d9d8da]' : ''}`}>
                <svg viewBox="0 0 24 24" className="h-6 w-6 shrink-0">{n.icon}</svg>
                {n.label}
              </span>
            </li>
          ))}
        </ul>

        <fieldset className="mb-[11px] ml-[15px] mt-2 min-w-0 flex-1 border border-[#d9d8da] pb-[9px] pl-[9px] pr-[11px]">
          <legend className="ml-[-2px] h-[14px] px-[2px] leading-[14px]">标峰</legend>
          <div role="tablist" className="flex items-end pt-[9px]">
            <button role="tab" aria-selected="true" className="relative -mb-px h-5 w-[67px] border border-b-0 border-[#d9d8da] bg-white leading-none">标签(L)</button>
            <button role="tab" className="h-[17px] w-[63px] border border-b-0 border-l-0 border-[#d9d8da] bg-[#f0eef0] leading-none">曲线(C)</button>
          </div>
          <div className="border border-[#d9d8da] pb-[22px] pl-[10px] pr-[10px] pt-[10px] shadow-[1px_1px_0_#eeedef]">
            <div className="flex items-center gap-[7px]">
              <Check label="标签" on />
              <span className="h-px flex-1 bg-[#98979a]" />
            </div>

            <div className="pl-[9px] pr-[9px] pt-[9px]">
              <div className="flex items-center justify-between">
                <Check label="使用曲线颜色" />
                <button aria-label="曲线颜色" className="relative flex h-[22px] w-[274px] items-center justify-center border border-[#adacae] bg-[#e2e0e2]">
                  <span className="h-[11px] w-[11px] bg-black" />
                  <span className="absolute right-[5px]"><Caret /></span>
                </button>
              </div>
              <div className="mt-2 flex items-center justify-between">
                <span className="text-[13px] font-bold">Times New Roman</span>
                <button className="h-[21px] w-[202px] border border-[#adacae] bg-[#e2e0e2] leading-none">字体...</button>
              </div>

              <div className="mt-2 grid grid-cols-[140px_1fr] items-center gap-y-[6px]">
                <label htmlFor="width">线宽:</label>
                <Spin id="width" value="2.5" active />
                <label htmlFor="unit">单位:</label>
                <Dropdown id="unit" value="ppm" />
                <label htmlFor="digits">小数:</label>
                <Spin id="digits" value="1" />
                <label htmlFor="place">标签位置:</label>
                <Dropdown id="place" value="顶部" />
              </div>

              <fieldset className="mt-[6px] border border-[#d9d8da] pb-[8px] pl-2 pr-[9px]">
                <legend className="h-[14px] px-[2px] leading-[14px]">可视度:</legend>
                <div className="grid grid-cols-[1fr_194px] items-center gap-y-[6px] pt-2">
                  <label htmlFor="visible">可视:</label>
                  <Dropdown id="visible" value="默认值" />
                  <label htmlFor="hidden">隐藏:</label>
                  <Dropdown id="hidden" value="默认值" />
                </div>
              </fieldset>

              <div className="mt-2 grid grid-cols-[140px_1fr] gap-y-[9px]">
                <Check label="位置显示" on />
                <Check label="注释显示" on />
                <Check label="刻度显示" />
                <Check label="显示归属" />
              </div>
            </div>
          </div>
        </fieldset>
      </div>

      <footer className="flex gap-2 pb-3 pl-3 pr-3 pt-2">
        <PushButton label="设置为默认" />
        <PushButton label="还原" />
        <span className="flex-1" />
        <PushButton label="OK" />
        <PushButton label="取消" />
        <PushButton label="应用" primary />
      </footer>
    </section>
  )
}

/* ---------- window chrome ---------- */

function ColorButton({ label, swatch, className = '' }: { label: string; swatch: ReactNode; className?: string }) {
  return (
    <button className={`relative flex h-[21px] w-[97px] shrink-0 items-center justify-center gap-[6px] border border-[#adacae] bg-[#e2e0e2] ${className}`}>
      {swatch}
      {label}
      <span className="absolute right-[5px]"><Caret /></span>
    </button>
  )
}

const menus = [
  { label: '视图(V)', width: 'w-[56px]' },
  { label: '数据库（D）', width: 'w-[85px]' },
  { label: '处理(P)', width: 'w-[55px]' },
  { label: '分析(A)', width: 'w-[56px]' },
  { label: '高级(d)', width: 'w-[56px]' },
  { label: 'Stack', width: 'w-[47px]' },
  { label: '质谱分析', width: 'w-[64px]' },
  { label: '预测(r)', width: 'w-[53px]' },
  { label: '脚本', width: 'w-[40px]' },
  { label: '文档(D)', width: 'w-[57px]' },
  { label: '帮助(H)', width: 'w-[56px]' },
]

const apps: { name: string; icon: ReactNode; running?: boolean; current?: boolean }[] = [
  { name: 'WeChat', icon: <g><ellipse cx="9" cy="9" rx="8" ry="7" fill="#3ddc6c" /><path d="M3 13l-1 5 5-3z" fill="#3ddc6c" /><circle cx="6" cy="7" r="1" fill="#155" /><circle cx="11" cy="7" r="1" fill="#155" /><ellipse cx="17" cy="15" rx="7" ry="6" fill="#f2f2f2" /><path d="M20 19l2 4-5-2z" fill="#f2f2f2" /><circle cx="15" cy="13.500" r="1" fill="#444" /><circle cx="19" cy="13.500" r="1" fill="#444" /></g> },
  { name: 'Chrome', running: true, icon: <g><circle cx="12" cy="12" r="11" fill="#f5c535" /><path d="M12 12L2.500 6.500A11 11 0 0 1 21.500 6.500z" fill="#e0483a" /><path d="M12 12l-9.500-5.500A11 11 0 0 0 11 23l5-9z" fill="#3aa757" /><circle cx="12" cy="12" r="5.500" fill="#fff" /><circle cx="12" cy="12" r="4.200" fill="#4285f4" /></g> },
  { name: 'Calculator', icon: <g><path d="M3 0h18v24H3z" fill="#8fa3b2" /><path d="M5 2h14v5H5z" fill="#45c1e4" /><path d="M5 9h4v3H5zM10 9h4v3h-4zM15 9h4v3h-4zM5 14h4v3H5zM10 14h4v3h-4zM5 19h4v3H5zM10 19h4v3h-4z" fill="#e8eef2" /><path d="M15 14h4v8h-4z" fill="#1b4f80" /></g> },
  { name: 'ChemOffice', icon: <g><circle cx="12" cy="12" r="11" fill="#1d5a8c" stroke="#cde" /><ellipse cx="11" cy="12" rx="9" ry="10" fill="#e8eef0" /><path d="M3 16L14 3l-1 9z" fill="#d8433c" /><path d="M5 17l6-9M8 16l4-8" stroke="#fff" /><path d="M14 3q6 6 5 12l-6-3z" fill="#3aa068" /><path d="M3 17l10-5 6 3q-6 7-16 2z" fill="#edc93c" /></g> },
  { name: 'Explorer', icon: <g><path d="M1 3h8l2 2h12v5H1z" fill="#e3a92e" /><path d="M1 7h22v14H1z" fill="#fbd560" /><path d="M5 13h14v9h-4v-5H9v5H5z" fill="#4a94cc" /></g> },
  { name: 'CD', icon: <g><path d="M12 0l10 5v12l-10 7L2 17V5z" fill="#1f5a2c" stroke="#7aa882" /><circle cx="12" cy="12" r="8.500" fill="#287a3a" /><text x="12" y="16" textAnchor="middle" className="font-['Liberation_Sans'] text-[11px] font-bold" fill="#fff">CD</text></g> },
  { name: 'MestReNova', running: true, current: true, icon: <MnovaLogo size="h-6 w-6" /> },
]

function Taskbar() {
  return (
    <footer className="flex h-10 shrink-0 bg-[#1f1e23] text-white">
      <div className="flex pl-[3px]">
        {apps.map((a) => (
          <button key={a.name} aria-label={a.name} className={`flex w-[49px] flex-col items-center justify-end ${a.current ? 'bg-[#4c4c50]' : ''}`}>
            <svg viewBox="0 0 24 24" className="mb-[7px] h-[22px] w-[22px]">{a.icon}</svg>
            <span className={`h-[2px] ${a.current ? 'w-full' : 'w-10'} ${a.running ? 'bg-[#a9e3c9]' : ''}`} />
          </button>
        ))}
      </div>
      <div className="ml-auto flex items-center">
        <span className="flex w-6 justify-center"><ChevronUp className="h-[18px] w-[18px]" strokeWidth={1.5} /></span>
        <span className="flex w-6 justify-center">
          <svg viewBox="0 0 12 18" className="h-[17px] w-3"><rect x="3" y="0" width="6" height="12" rx="1" fill="#fff" /><path d="M1 8v5q0 1 1 1h8q1 0 1-1V8M6 14v3M3 17h6" fill="none" stroke="#fff" /></svg>
        </span>
        <span className="flex w-6 justify-center">
          <svg viewBox="0 0 16 14" className="h-[14px] w-4"><path d="M7 4h7v7H4V8" fill="none" stroke="#fff" /><path d="M6 6h7v4H6zM15 6h1v3h-1zM1 3h5v3L5 8H2L1 6zM2 1h1v2H2zM4 1h1v2H4z" fill="#fff" /></svg>
        </span>
        <span className="flex w-6 justify-center">
          <svg viewBox="0 0 16 14" className="h-[14px] w-4"><path d="M5 2h10v8H4V6M9 10v3M6 13h6M1 1h4v4H1zM3 5v4" fill="none" stroke="#fff" strokeWidth="1.200" /></svg>
        </span>
        <span className="flex w-6 justify-center">
          <svg viewBox="0 0 16 14" className="h-[14px] w-4"><path d="M1 5h2l4-3v10L3 9H1zM9 5q1 2 0 4M11 3q3 4 0 8" fill="none" stroke="#fff" /><path d="M13 1q4 6 0 12" fill="none" stroke="#888" /></svg>
        </span>
        <span className="w-6 text-center font-['Noto_Sans_CJK_SC'] text-[14px]">英</span>
        <div className="flex w-[29px] flex-col items-end overflow-hidden font-['Open_Sans'] text-[12px] leading-[19px]">
          <span className="w-2">6</span>
          <span className="w-[24px] whitespace-nowrap">2022</span>
        </div>
      </div>
    </footer>
  )
}

export default function App() {
  return (
    <div className="relative flex h-screen flex-col overflow-hidden bg-[#f0eef0] font-['Liberation_Serif','Noto_Sans_CJK_SC',serif] text-[12px] leading-4 text-[#111]">
      <header className="bg-white font-['Open_Sans','Noto_Sans_CJK_SC',sans-serif] text-[#8f8f8f]">
        <div className="flex h-6 items-center justify-between pr-[15px]">
          <h1 className="-ml-[2px] text-[12px]">a - [Document 1*]</h1>
          <button aria-label="minimize" className="h-px w-[10px] bg-[#888]" />
        </div>
        <nav className="flex h-[22px] items-center whitespace-nowrap border-b border-[#e2e1e3]">
          <span className="flex w-[37px] shrink-0 pr-4"><button className="-ml-[6px]">辑(E)</button></span>
          {menus.map((m) => (
            <button key={m.label} className={`shrink-0 text-left ${m.width}`}>{m.label}</button>
          ))}
        </nav>
      </header>

      <div className="flex h-[26px] shrink-0 items-center border-b border-[#b4b2b6]">
        <ToolItem name="v" />
        <ToolItem name="save" />
        <ToolItem name="v" />
        <ToolItem name="|" />
        <Tools items={rowOne} />
        <label className="relative h-[22px] w-[74px]">
          <select aria-label="zoom" className="h-full w-full appearance-none border border-[#77767a] bg-white pl-[3px] font-['Noto_Sans_CJK_SC'] text-[12px] leading-none"><option>整个页面</option></select>
          <ChevronDown className="pointer-events-none absolute right-[3px] top-[6px] h-[11px] w-[11px]" strokeWidth={2} />
        </label>
        <Tools items={rowOneView} />
      </div>
      <div className="flex h-[26px] shrink-0 items-center border-b-2 border-[#94949a]">
        <ToolItem name="|" />
        <Tools items={rowTwo} />
      </div>

      <div className="flex min-h-0 flex-1">
        <aside className="flex w-[263px] shrink-0 flex-col">
          <div className="mt-px flex h-[19px] items-center justify-end gap-[7px] border border-l-0 border-[#b9b7ba] bg-[#dbd9db] pr-[3px]">
            <button aria-label="float">
              <svg viewBox="0 0 9 9" className="h-[9px] w-[9px]"><path d="M3 3V.5h5.500V6H6M.5 3.500H6v5H.5zM3 1h5M1 4h5" fill="none" stroke="#000" /></svg>
            </button>
            <button aria-label="close panel"><X className="h-[11px] w-[11px]" strokeWidth={4} color="#000" /></button>
          </div>
          <div className="mt-[3px] flex flex-1 border-b border-r border-t border-[#77797e] bg-[#a3a8af]">
            <div className="flex-1 pr-[6px] pt-1">
              <figure className="border border-l-0 border-[#22405c] pb-[6px]">
                <figcaption className="-ml-[2px] h-[19px] overflow-hidden whitespace-nowrap pt-[3px] font-['Liberation_Mono'] text-[10px] text-[#183450]">-1-wsw-H.1.fid</figcaption>
                <Thumbnail />
              </figure>
            </div>
            <div className="flex w-[17px] flex-col items-center justify-between bg-[#f0eef0] py-[3px]">
              <ChevronUp className="h-[11px] w-[11px]" color="#b0b0b0" strokeWidth={3} />
              <ChevronDown className="h-[11px] w-[11px]" color="#b0b0b0" strokeWidth={3} />
            </div>
          </div>
          <div className="flex h-5">
            <button className="h-[17px] w-[85px] border-b border-[#cfcdd0] pl-[3px] text-left leading-none">Data Browser</button>
          </div>
        </aside>

        <main className="ml-1 flex min-w-0 flex-1 flex-col border-l border-[#77797e]">
          <div className="min-h-0 flex-1 overflow-hidden bg-[#a3a8af] pl-[169px] pr-[91px] pt-[15px]">
            <div className="bg-white shadow-[0_0_0_1px_#808288,8px_12px_0_#535257]"><Spectrum /></div>
          </div>
          <div className="flex h-[18px] shrink-0 items-center border-b border-[#85868a]">
            <button aria-label="scroll left" className="ml-[2px]"><ChevronLeft className="h-3 w-3" strokeWidth={3} color="#555" /></button>
            <span className="ml-[514px] h-[15px] w-[482px] bg-[#cbc9cb]" />
          </div>
        </main>
      </div>

      <div className="flex h-7 shrink-0 items-center">
        <ColorButton className="-ml-11" label="亮灰色" swatch={<span className="h-3 w-3 border-2 border-black" />} />
        <ColorButton className="ml-[2px]" label="黑色" swatch={<span className="h-3 w-3 border-2 border-black" />} />
        <ToolItem name=":" />
        <button aria-label="align" className="flex h-[21px] w-[35px] items-center justify-between border border-[#a8d0ee] bg-[#bcdcf4] px-[2px]">
          <svg viewBox="0 0 16 14" className="h-[14px] w-4"><path d="M0 1h14M0 4h16M0 7h13M0 10h16M0 13h12" stroke="#111" strokeWidth="1.600" /></svg>
          <span className="ml-px h-full w-px bg-[#9cc4e2]" />
          <Caret />
        </button>
        <button className="w-[23px] text-[19px] font-bold">B</button>
        <ToolItem name="v" />
        <button className="w-[23px] font-['Liberation_Sans'] text-[13px]">X<sub className="text-[7px] text-[#d03030]">2</sub></button>
        <ToolItem name="v" />
        <ToolItem name="|" />
        <ColorButton className="ml-[2px]" label="黑色" swatch={<span className="w-3 text-center font-['Liberation_Mono'] text-[12px] font-bold">A</span>} />
        <div className="ml-px h-[21px] w-[213px]">
          <div className="relative h-full">
            <select aria-label="font" className={field} defaultValue="Arial"><option>Arial</option></select>
            <span className="pointer-events-none absolute inset-y-0 right-[5px] flex items-center"><Caret /></span>
          </div>
        </div>
        <label className="relative h-[21px] w-[37px]">
          <select aria-label="font size" className="h-full w-full appearance-none border border-[#85848a] bg-white pl-[2px] text-[13px] leading-none"><option>12</option></select>
          <ChevronDown className="pointer-events-none absolute right-[3px] top-[5px] h-[11px] w-[11px]" strokeWidth={2} />
        </label>
        <Tools items={rowThree} />
      </div>
      <div className="flex h-[25px] shrink-0 items-center justify-end">
        <span className="h-[21px] w-10 overflow-hidden whitespace-nowrap border-l border-[#d2d0d3] pl-1 font-bold leading-[21px]">许可文件</span>
      </div>
      <Taskbar />

      <Dialog />
    </div>
  )
}
